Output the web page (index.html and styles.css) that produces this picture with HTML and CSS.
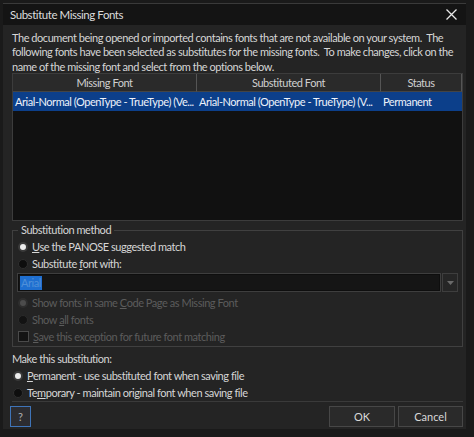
FILE: index.html
```html
<!DOCTYPE html>
<html>
<head>
<meta charset="utf-8">
<link rel="stylesheet" href="styles.css">
</head>
<body>
<div class="window">
  <div class="titlebar">
    <span class="title">Substitute Missing Fonts</span>
    <svg class="close" width="11" height="11" viewBox="0 0 11 11"><path d="M0.5 0.5 L10.5 10.5 M10.5 0.5 L0.5 10.5" stroke="#e8e8e8" stroke-width="1.3" fill="none"/></svg>
  </div>
  <div class="body">
    <p class="intro">The document being opened or imported contains fonts that are not available on your system.&nbsp; The<br>following fonts have been selected as substitutes for the missing fonts.&nbsp; To make changes, click on the<br>name of the missing font and select from the options below.</p>
    <div class="table">
      <div class="thead">
        <div class="th c1">Missing Font</div>
        <div class="th c2">Substituted Font</div>
        <div class="th c3">Status</div>
      </div>
      <div class="tr sel">
        <div class="td c1">Arial-Normal (OpenType - TrueType) (Ve...</div>
        <div class="td c2">Arial-Normal (OpenType - TrueType) (V...</div>
        <div class="td c3">Permanent</div>
      </div>
    </div>
    <fieldset class="group">
      <legend>Substitution method</legend>
      <label class="opt"><span class="radio on"></span><span><u>U</u>se the PANOSE suggested match</span></label>
      <label class="opt"><span class="radio"></span><span>Substitute <u>f</u>ont with:</span></label>
      <div class="combo">
        <div class="combo-field"><span class="hl">Arial</span></div>
        <div class="combo-btn"><svg width="7" height="4" viewBox="0 0 7 4"><path d="M0 0 L7 0 L3.5 4 Z" fill="#6a6a6a"/></svg></div>
      </div>
      <label class="opt dis"><span class="radio on"></span><span>Show fonts in same <u>C</u>ode Page as Missing Font</span></label>
      <label class="opt dis"><span class="radio"></span><span>Show <u>a</u>ll fonts</span></label>
      <label class="opt dis"><span class="check"></span><span><u>S</u>ave this exception for future font matching</span></label>
    </fieldset>
    <div class="make">Make this substitution:</div>
    <label class="opt outer"><span class="radio on"></span><span><u>P</u>ermanent - use substituted font when saving file</span></label>
    <label class="opt outer"><span class="radio"></span><span>Te<u>m</u>porary - maintain original font when saving file</span></label>
    <div class="sep"></div>
    <div class="buttons">
      <div class="btn help">?</div>
      <div class="spacer"></div>
      <div class="btn ok">OK</div>
      <div class="btn cancel">Cancel</div>
    </div>
  </div>
</div>
</body>
</html>
```
FILE: styles.css
```css
html, body {
  margin: 0;
  padding: 0;
  background: #1a1a1a;
  width: 474px;
  height: 437px;
  overflow: hidden;
}
body {
  font-family: Lato, "Open Sans", sans-serif;
  font-size: 11px;
  letter-spacing: -0.45px;
  color: #d6d6d6;
}
.window {
  margin: 3px 8px 0 3px;
  height: 425px;
  background: #242424;
  border-top: 1px solid #3a3a3a;
  display: flex;
  flex-direction: column;
}
.titlebar {
  height: 21px;
  flex: none;
  background: #141414;
  display: flex;
  align-items: center;
  justify-content: space-between;
  padding: 0 9px 0 7px;
}
.title {
  color: #dcdcdc;
  font-size: 11.5px;
}
.body {
  flex: 1;
  padding: 6px 3px 0 9px;
  display: flex;
  flex-direction: column;
}
.intro {
  margin: 0;
  line-height: 14.3px;
  height: 42px;
  flex: none;
  white-space: nowrap;
}
.table {
  height: 146px;
  flex: none;
  background: #111111;
  border: 1px solid #3c3c3c;
}
.thead {
  display: flex;
  height: 18px;
  background: #2a2a2a;
}
.th {
  text-align: center;
  line-height: 18px;
  border-right: 1px solid #555;
  border-bottom: 1px solid #444;
  box-sizing: border-box;
  color: #d0d0d0;
}
.c1 { width: 184px; flex: none; }
.c2 { width: 184px; flex: none; }
.c3 { width: 81px; flex: none; }
.tr { display: flex; height: 19px; }
.sel { background: #0c3f8a; }
.td {
  line-height: 19px;
  padding-left: 2px;
  box-sizing: border-box;
  white-space: nowrap;
  overflow: hidden;
  color: #eef2fa;
}
.group {
  margin: 1px 0 0 0;
  padding: 0 5px 1px 5px;
  border: 1px solid #404040;
  min-inline-size: 0;
}
.group legend {
  padding: 0 3px;
  margin: 0;
  line-height: 16px;
  color: #d6d6d6;
}
.opt {
  display: flex;
  align-items: center;
  height: 17px;
  gap: 4px;
  white-space: nowrap;
}
.outer { padding-left: 1px; }
.opt u { text-decoration: underline; text-underline-offset: 1px; }
.dis { color: #5c5c5c; }
.radio {
  width: 10px;
  height: 10px;
  border-radius: 50%;
  background: #0e0e0e;
  border: 1px solid #2e2e2e;
  box-sizing: border-box;
  display: inline-block;
  flex: none;
}
.radio.on { background: #ececec; border: 2px solid #3a3a3a; }
.dis .radio { background: #131313; border-color: #2a2a2a; }
.dis .radio.on { background: #4c4c4c; border: 2px solid #2e2e2e; }
.check {
  width: 11px;
  height: 11px;
  background: #141414;
  border: 1px solid #4a4a4a;
  box-sizing: border-box;
  display: inline-block;
  flex: none;
}
.combo {
  display: flex;
  height: 19px;
  margin: 1px 0 2px -1px;
  width: 441px;
  gap: 1px;
}
.combo-field {
  flex: 1;
  border: 1px solid #3e3e3e;
  background: #151515;
  box-shadow: inset 0 0 0 1px #0e0e0e;
  padding: 1px 2px;
  display: flex;
  align-items: center;
}
.hl {
  background: #1f6fd0;
  color: #4f8fd8;
  line-height: 14px;
  padding: 0 1px;
}
.combo-btn {
  width: 14px;
  border: 1px solid #3e3e3e;
  background: #262626;
  display: flex;
  align-items: center;
  justify-content: center;
}
.make {
  margin: 4px 0 0 0;
  line-height: 16px;
  height: 16px;
}
.sep {
  height: 1px;
  flex: none;
  background: #3a3a3a;
  margin: 0 0 4px 0;
}
.buttons {
  display: flex;
  height: 21px;
  gap: 3px;
  margin-left: -2px;
}
.spacer { flex: 1; }
.btn {
  border: 1px solid #474747;
  background: #2a2a2a;
  text-align: center;
  line-height: 19px;
  box-sizing: border-box;
  color: #d8d8d8;
  letter-spacing: 0;
}
.help {
  width: 21px;
  border-color: #3f74b8;
  background: #2c2c30;
  color: #b0b0b0;
}
.ok { width: 66px; }
.cancel { width: 65px; }
```
